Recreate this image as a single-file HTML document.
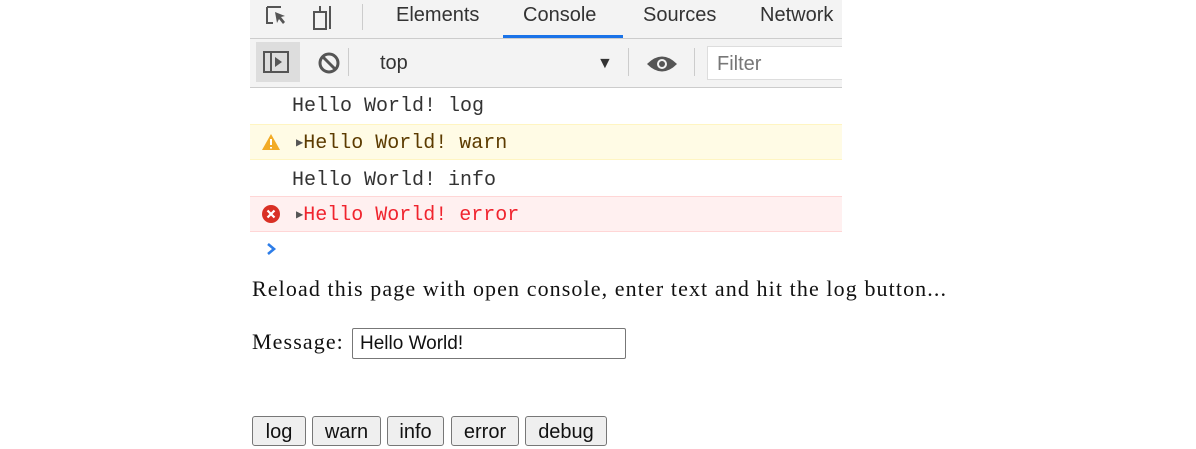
<!DOCTYPE html>
<html><head><style>
body{margin:0;width:1196px;height:449px;background:#fff;position:relative;overflow:hidden;font-family:"Liberation Sans",sans-serif}
.a{position:absolute}
.mono{font-family:"Liberation Mono",monospace;font-size:20px;white-space:pre}
.tab{position:absolute;top:4px;font-size:20px;color:#333}
.btn{position:absolute;top:416px;height:30px;border:1px solid #777;border-radius:3px;background:#efefef;font-size:20px;line-height:30px;text-align:center;box-sizing:border-box;color:#111}
.serif{font-family:'Liberation Serif',serif;font-size:22px;letter-spacing:1.1px;color:#111;white-space:nowrap}
</style></head><body>
<div class="a" style="left:250px;top:0;width:592px;height:38px;background:#f3f3f3;border-bottom:1px solid #ccc"></div>
<svg class="a" style="left:264px;top:4px" width="80" height="26"><path d="M3 3h14M3 3v16h6" stroke="#555" stroke-width="2" fill="none"/><path d="M11 8l10 4-4 1 4 5-2 2-4-5-2 4z" fill="#555"/><rect x="50" y="8" width="12" height="17" stroke="#555" stroke-width="2" fill="none"/><path d="M56 2v6M66 2v23" stroke="#555" stroke-width="2"/></svg>
<div class="a" style="left:362px;top:4px;width:1px;height:26px;background:#ccc"></div>
<div class="tab" style="left:396px">Elements</div>
<div class="tab" style="left:523px">Console</div>
<div class="tab" style="left:643px">Sources</div>
<div class="tab" style="left:760px">Network</div>
<div class="a" style="left:503px;top:35px;width:120px;height:3px;background:#1a73e8"></div>
<div class="a" style="left:250px;top:39px;width:592px;height:48px;background:#f3f3f3;border-bottom:1px solid #ccc;overflow:hidden">
<div class="a" style="left:457px;top:7px;width:150px;height:34px;background:#fff;border:1px solid #ddd;box-sizing:border-box"></div>
<div class="a" style="left:467px;top:14px;font-size:20px;color:#777">Filter</div>
</div>
<div class="a" style="left:256px;top:42px;width:44px;height:40px;background:#ddd"></div>
<svg class="a" style="left:262px;top:50px" width="30" height="26"><rect x="2" y="2" width="24" height="20" fill="none" stroke="#555" stroke-width="2"/><path d="M9 2v20" stroke="#555" stroke-width="2"/><path d="M13 7l7 5-7 5z" fill="#555"/></svg>
<svg class="a" style="left:317px;top:51px" width="26" height="26"><circle cx="12" cy="12" r="9" fill="none" stroke="#555" stroke-width="3"/><path d="M6 6l12 12" stroke="#555" stroke-width="3"/></svg>
<div class="a" style="left:348px;top:48px;width:1px;height:28px;background:#ccc"></div>
<div class="a" style="left:380px;top:52px;font-size:20px;color:#333">top</div>
<div class="a" style="left:597px;top:55px;font-size:16px;color:#333">▼</div>
<div class="a" style="left:628px;top:48px;width:1px;height:28px;background:#ccc"></div>
<svg class="a" style="left:645px;top:53px" width="34" height="22"><path d="M2 11Q17-4 32 11Q17 26 2 11z" fill="#555"/><circle cx="17" cy="11" r="5" fill="#f3f3f3"/><circle cx="17" cy="11" r="3" fill="#555"/></svg>
<div class="a" style="left:694px;top:48px;width:1px;height:28px;background:#ccc"></div>
<div class="a mono" style="left:292px;top:95px;color:#333">Hello World! log</div>
<div class="a" style="left:250px;top:124px;width:592px;height:36px;background:#fffbe5;border-top:1px solid #fff5c2;border-bottom:1px solid #fff5c2;box-sizing:border-box"></div>
<svg class="a" style="left:261px;top:133px" width="20" height="18"><path d="M10 1L19 17H1z" fill="#f2ab26"/><path d="M10 6v6M10 14v1.5" stroke="#fff" stroke-width="2"/></svg>
<div class="a mono" style="left:296px;top:132px;color:#5c3b00"><span style="font-size:12px;color:#555;position:relative;top:-2px">▶</span>Hello World! warn</div>
<div class="a mono" style="left:292px;top:169px;color:#333">Hello World! info</div>
<div class="a" style="left:250px;top:196px;width:592px;height:36px;background:#fff0f0;border-top:1px solid #ffd6d6;border-bottom:1px solid #ffd6d6;box-sizing:border-box"></div>
<svg class="a" style="left:261px;top:204px" width="20" height="20"><circle cx="10" cy="10" r="9" fill="#d93025"/><path d="M6.5 6.5l7 7M13.5 6.5l-7 7" stroke="#fff" stroke-width="2.2"/></svg>
<div class="a mono" style="left:296px;top:204px;color:#f0242e"><span style="font-size:12px;color:#555;position:relative;top:-2px">▶</span>Hello World! error</div>
<svg class="a" style="left:264px;top:241px" width="14" height="16"><path d="M4 3l6 5-6 5" stroke="#2d7de8" stroke-width="2.6" fill="none"/></svg>
<div class="a serif" style="left:252px;top:276px">Reload this page with open console, enter text and hit the log button...</div>
<div class="a serif" style="left:252px;top:329px">Message:</div>
<div class="a" style="left:352px;top:328px;width:274px;height:31px;border:1px solid #777;border-radius:2px;box-sizing:border-box;font-size:19px;line-height:29px;padding-left:7px;color:#111">Hello World!</div>
<div class="btn" style="left:252px;width:54px">log</div>
<div class="btn" style="left:312px;width:69px">warn</div>
<div class="btn" style="left:387px;width:57px">info</div>
<div class="btn" style="left:451px;width:68px">error</div>
<div class="btn" style="left:525px;width:82px">debug</div>
</body></html>
